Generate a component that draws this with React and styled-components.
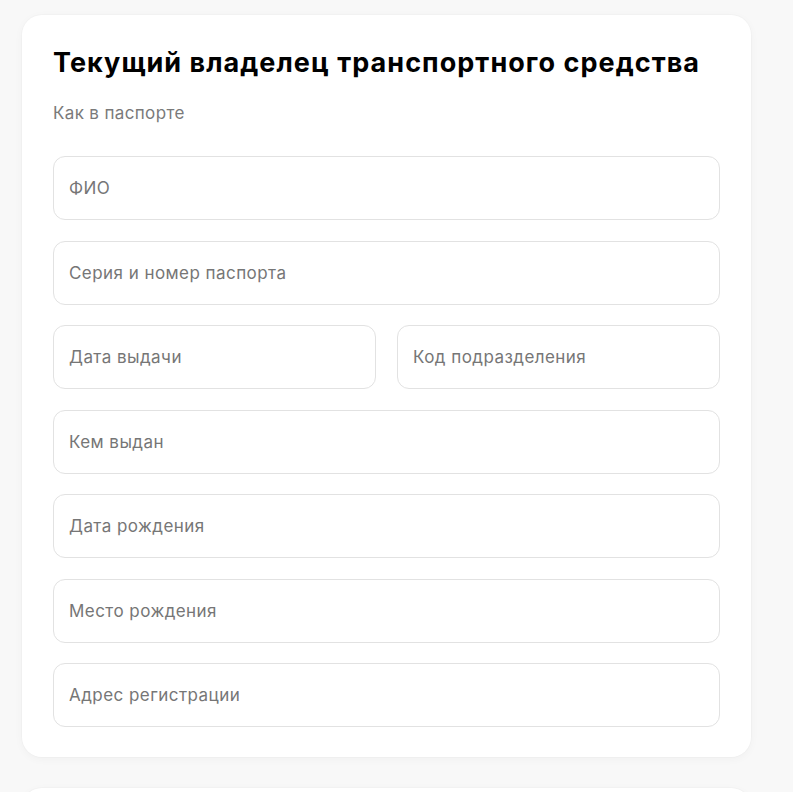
import React from "react";
import styled, { createGlobalStyle } from "styled-components";

const Global = createGlobalStyle`
  html, body { margin: 0; padding: 0; background: #f8f8f8; }
  body { font-family: "Inter", "Noto Sans", sans-serif; }
  * { box-sizing: border-box; }
`;

const Page = styled.div`
  padding: 15px 42px 0 22px;
  display: flex;
  flex-direction: column;
  gap: 31px;
  height: 792px;
  overflow: hidden;
`;

const Card = styled.section`
  background: #fff;
  border-radius: 20px;
  box-shadow: 0 2px 10px rgba(0, 0, 0, 0.035), 0 0 0 1px rgba(0, 0, 0, 0.015);
  padding: 30px 31px 30px 31px;
  display: flex;
  flex-direction: column;
  flex-shrink: 0;
`;

const Title = styled.h2`
  margin: 0;
  font-size: 27px;
  line-height: 36px;
  font-weight: 700;
  color: #000;
  letter-spacing: 1.05px;
`;

const Subtitle = styled.p`
  margin: 21px 0 0;
  font-size: 17px;
  line-height: 22px;
  color: #7a7a7a;
  letter-spacing: 0.35px;
`;

const Fields = styled.div`
  margin-top: 32px;
  display: flex;
  flex-direction: column;
  gap: 20.5px;
`;

const Row = styled.div`
  display: grid;
  grid-template-columns: 1fr 1fr;
  gap: 21px;
`;

const Field = styled.input`
  width: 100%;
  height: 64px;
  border: 1px solid #e2e2e2;
  border-radius: 12px;
  padding: 0 15px;
  font-family: inherit;
  font-size: 17px;
  letter-spacing: 0.45px;
  color: #222;
  background: #fff;
  outline: none;
  &::placeholder { color: #767676; }
`;

const Ghost = styled(Card)`
  height: 60px;
  padding: 0;
`;

export default function App() {
  return (
    <>
      <Global />
      <Page>
        <Card>
          <Title>Текущий владелец транспортного средства</Title>
          <Subtitle>Как в паспорте</Subtitle>
          <Fields>
            <Field placeholder="ФИО" />
            <Field placeholder="Серия и номер паспорта" />
            <Row>
              <Field placeholder="Дата выдачи" />
              <Field placeholder="Код подразделения" />
            </Row>
            <Field placeholder="Кем выдан" />
            <Field placeholder="Дата рождения" />
            <Field placeholder="Место рождения" />
            <Field placeholder="Адрес регистрации" />
          </Fields>
        </Card>
        <Ghost />
      </Page>
    </>
  );
}
